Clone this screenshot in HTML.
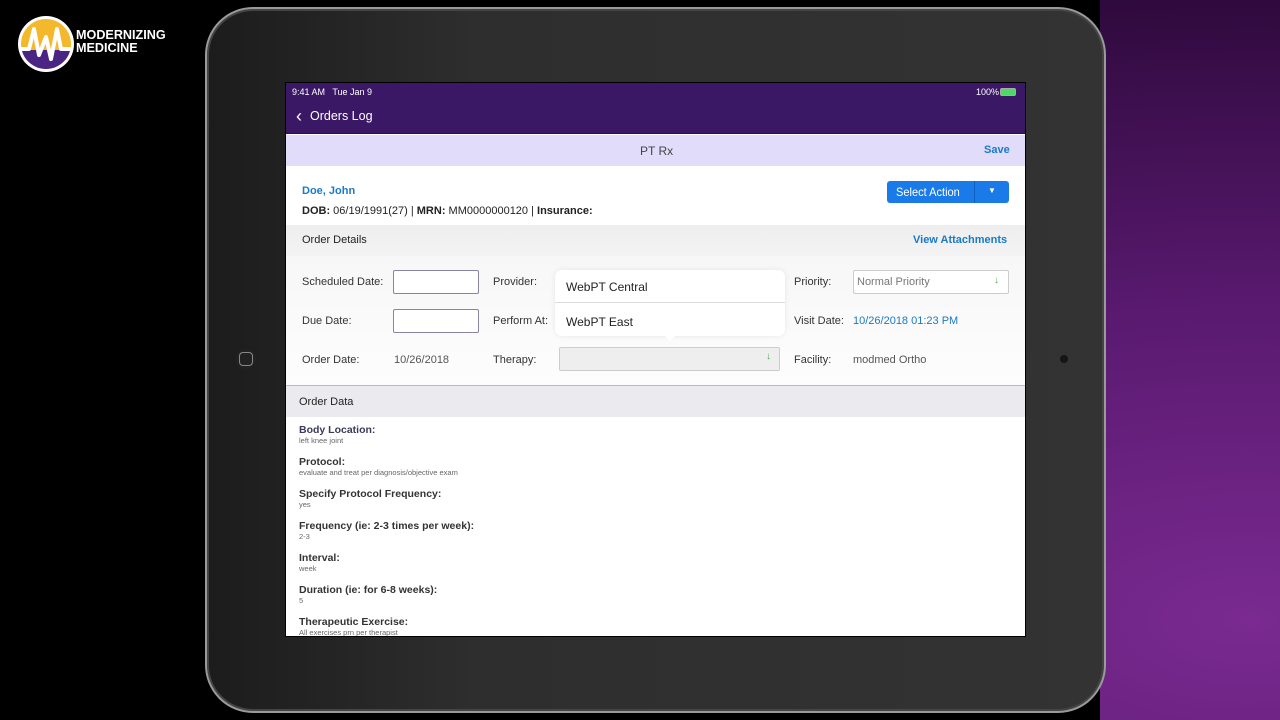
<!DOCTYPE html>
<html><head><meta charset="utf-8"><style>
*{margin:0;padding:0;box-sizing:border-box}
body{width:1280px;height:720px;overflow:hidden;position:relative;font-family:"Liberation Sans",sans-serif;
background:linear-gradient(90deg,#000 0,#000 1100px,transparent 1100px),radial-gradient(ellipse at 1250px 620px,#7a2a90 0,#5a1a70 35%,#2a0838 75%,#1a0424 100%);}
.a{position:absolute}
.tab{left:205px;top:7px;width:901px;height:706px;border-radius:48px;background:linear-gradient(90deg,#1c1c1c,#2e2e2e 30%,#333 100%);border:2px solid #9a9a9a;box-shadow:inset 0 0 0 2px #444}
.scr{left:285px;top:82px;width:741px;height:555px;background:#fff;border:1px solid #000;overflow:hidden}
.t{position:absolute;white-space:nowrap;font-size:11px;color:#333}
.b{color:#1a7ac8}
.od div.l{font-size:10.5px;font-weight:bold;color:#333;margin-bottom:1px}
.od div.v{font-size:7.5px;color:#666;margin-bottom:13px}
</style></head><body>
<svg class="a" style="left:17px;top:15px" width="58" height="58" viewBox="0 0 58 58">
<circle cx="29" cy="29" r="28" fill="#fff"/>
<clipPath id="c"><circle cx="29" cy="29" r="25"/></clipPath>
<g clip-path="url(#c)"><rect x="0" y="0" width="58" height="35" fill="#f3b82b"/><rect x="0" y="35" width="58" height="25" fill="#4a2583"/></g>
<path d="M4 34 L12 34 L17 14 L22 40 L29 22 L34 44 L40 14 L44 34 L54 34" fill="none" stroke="#fff" stroke-width="4" stroke-linejoin="round"/>
</svg>
<div class="a" style="left:76px;top:28px;color:#fff;font-weight:bold;font-size:13px;line-height:13px;transform:scaleX(0.97);transform-origin:left">MODERNIZING<br>MEDICINE</div>
<div class="a tab"></div>
<div class="a" style="left:236px;top:349px;width:20px;height:20px;border-radius:50%;background:#222"></div>
<div class="a" style="left:239px;top:352px;width:14px;height:14px;border:1.5px solid #888;border-radius:4px"></div>
<div class="a" style="left:1060px;top:355px;width:8px;height:8px;border-radius:50%;background:#151515"></div>
<div class="a scr">
<div class="a" style="left:0;top:0;width:741px;height:51px;background:#3a1866;border-bottom:1px solid #2a0f50"></div>
<div class="t" style="left:6px;top:4px;color:#fff;font-size:9px">9:41 AM&nbsp;&nbsp; Tue Jan 9</div>
<div class="t" style="left:690px;top:4px;color:#fff;font-size:9px">100%</div>
<div class="a" style="left:714px;top:5px;width:16px;height:8px;background:#4cd964;border:1px solid #aaa;border-radius:2px"></div>
<div class="t" style="left:10px;top:24px;color:#fff;font-size:18px;line-height:18px">&#8249;</div>
<div class="t" style="left:24px;top:26px;color:#fff;font-size:12.5px">Orders Log</div>
<div class="a" style="left:0;top:52px;width:741px;height:31px;background:#e0dcfa"></div>
<div class="t" style="left:354px;top:61px;font-size:12px;color:#444">PT Rx</div>
<div class="t b" style="left:698px;top:61px;font-weight:bold;font-size:11px">Save</div>
<div class="t b" style="left:16px;top:102px;font-weight:bold">Doe, John</div>
<div class="t" style="left:16px;top:122px;color:#222"><b>DOB:</b> 06/19/1991(27) | <b>MRN:</b> MM0000000120 | <b>Insurance:</b></div>
<div class="a" style="left:601px;top:98px;width:122px;height:22px;background:#1a7be8;border-radius:3px"></div>
<div class="a" style="left:688px;top:98px;width:1px;height:22px;background:#0e5fc0"></div>
<div class="t" style="left:610px;top:102px;color:#fff;font-size:12px;transform:scaleX(0.92);transform-origin:left">Select Action</div>
<div class="t" style="left:702px;top:103px;color:#fff;font-size:8px">&#9660;</div>
<div class="a" style="left:0;top:142px;width:741px;height:31px;background:linear-gradient(180deg,#eee,#f3f3f3)"></div>
<div class="t" style="left:16px;top:151px;color:#222">Order Details</div>
<div class="t b" style="left:627px;top:151px;font-weight:bold">View Attachments</div>
<div class="a" style="left:0;top:173px;width:741px;height:130px;background:linear-gradient(180deg,#f7f7f7,#fdfdfd)"></div>
<div class="t" style="left:16px;top:193px">Scheduled Date:</div>
<div class="a" style="left:107px;top:187px;width:86px;height:24px;border:1px solid #8a84a0;border-radius:2px;background:#fff"></div>
<div class="t" style="left:16px;top:232px">Due Date:</div>
<div class="a" style="left:107px;top:226px;width:86px;height:24px;border:1px solid #8a84a0;border-radius:2px;background:#fff"></div>
<div class="t" style="left:16px;top:271px">Order Date:</div>
<div class="t" style="left:108px;top:271px;color:#555">10/26/2018</div>
<div class="t" style="left:207px;top:193px">Provider:</div>
<div class="t" style="left:207px;top:232px">Perform At:</div>
<div class="t" style="left:207px;top:271px">Therapy:</div>
<div class="a" style="left:273px;top:264px;width:221px;height:24px;border:1px solid #ccc;border-radius:2px;background:#eee"></div>
<div class="t" style="left:480px;top:268px;color:#5a5;font-size:10px">&#8595;</div>
<div class="a" style="left:269px;top:187px;width:230px;height:66px;background:#fff;border-radius:7px;box-shadow:0 0 6px rgba(0,0,0,.08)"></div>
<div class="a" style="left:378px;top:252px;width:0;height:0;border-left:6px solid transparent;border-right:6px solid transparent;border-top:6px solid #fff"></div>
<div class="a" style="left:269px;top:219px;width:230px;height:1px;background:#ddd"></div>
<div class="t" style="left:280px;top:197px;font-size:12px;color:#222">WebPT Central</div>
<div class="t" style="left:280px;top:232px;font-size:12px;color:#222">WebPT East</div>
<div class="t" style="left:508px;top:193px">Priority:</div>
<div class="a" style="left:567px;top:187px;width:156px;height:24px;border:1px solid #ccc;border-radius:2px;background:#fff"></div>
<div class="t" style="left:571px;top:193px;color:#777">Normal Priority</div>
<div class="t" style="left:708px;top:192px;color:#5a5;font-size:10px">&#8595;</div>
<div class="t" style="left:508px;top:232px">Visit Date:</div>
<div class="t b" style="left:567px;top:232px">10/26/2018 01:23 PM</div>
<div class="t" style="left:508px;top:271px">Facility:</div>
<div class="t" style="left:567px;top:271px;color:#555">modmed Ortho</div>
<div class="a" style="left:0;top:302px;width:741px;height:1px;background:#bbb"></div>
<div class="a" style="left:0;top:303px;width:741px;height:31px;background:#ebebef"></div>
<div class="t" style="left:13px;top:313px;color:#222">Order Data</div>
<div class="a od" style="left:13px;top:342px;line-height:1">
<div class="l" style="color:#3a3a5a">Body Location:</div><div class="v">left knee joint</div>
<div class="l">Protocol:</div><div class="v">evaluate and treat per diagnosis/objective exam</div>
<div class="l">Specify Protocol Frequency:</div><div class="v">yes</div>
<div class="l">Frequency (ie: 2-3 times per week):</div><div class="v">2-3</div>
<div class="l">Interval:</div><div class="v">week</div>
<div class="l">Duration (ie: for 6-8 weeks):</div><div class="v">5</div>
<div class="l">Therapeutic Exercise:</div><div class="v">All exercises prn per therapist</div>
</div>
</div>
</body></html>
